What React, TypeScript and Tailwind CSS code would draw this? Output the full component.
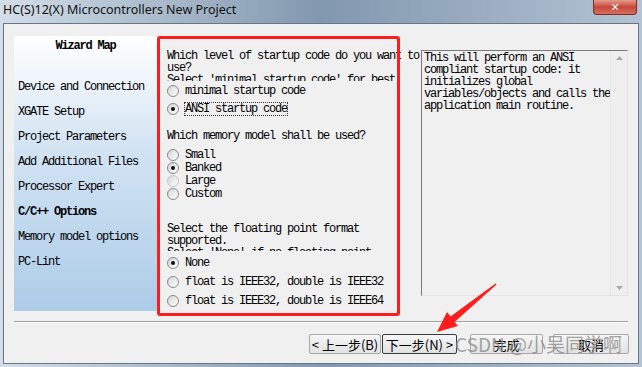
import React from 'react';

// --- shared text styles ---
const MONO = "font-['Liberation_Mono',monospace] text-[12px] leading-[12px] tracking-[-1.2px] text-black";

// --- Radio button (Win7 look) ---
const Radio: React.FC<{ checked?: boolean; disabled?: boolean }> = ({ checked, disabled }) => (
  <span
    className={`w-[12px] h-[12px] rounded-full border flex items-center justify-center shrink-0 bg-linear-to-br from-[#d6d6d6] to-white ${
      disabled ? 'border-[#c8c8c8]' : 'border-[#8a8a8a]'
    }`}
  >
    {checked && <span className="w-[4px] h-[4px] rounded-full bg-[#111]" />}
  </span>
);

const RadioRow: React.FC<{
  label: string;
  h: string;
  checked?: boolean;
  disabled?: boolean;
  focused?: boolean;
}> = ({ label, h, checked, disabled, focused }) => (
  <div className={`flex items-center gap-[6px] ${h}`}>
    <Radio checked={checked} disabled={disabled} />
    <span
      className={`${MONO} whitespace-pre ${disabled ? 'text-[#a0a0a0]' : ''} ${
        focused ? 'outline outline-1 outline-dotted outline-[#333] outline-offset-0' : ''
      }`}
    >
      {label}
    </span>
  </div>
);

const WIZARD_ITEMS = [
  { label: 'Device and Connection' },
  { label: 'XGATE Setup' },
  { label: 'Project Parameters' },
  { label: 'Add Additional Files' },
  { label: 'Processor Expert' },
  { label: 'C/C++ Options', bold: true },
  { label: 'Memory model options' },
  { label: 'PC-Lint' },
];

const WizardButton: React.FC<{ label: string; w: string; isDefault?: boolean }> = ({ label, w, isDefault }) => (
  <div
    className={`${w} h-[20px] flex items-center justify-center border rounded-[2px] bg-linear-to-b from-[#f6f6f6] to-[#e2e2e2] font-['Noto_Sans_CJK_SC',sans-serif] text-[13px] leading-none text-black whitespace-pre ${
      isDefault ? 'border-[#3c3c3c]' : 'border-[#a8a8a8]'
    }`}
  >
    {label}
  </div>
);

export default function App() {
  return (
    <div className="relative w-[642px] h-[367px] overflow-hidden flex flex-col bg-linear-to-r from-[#d3dee8] via-[#8298af] to-[#b3c3d3]">
      {/* title bar */}
      <div className="h-[23px] shrink-0 flex items-start">
        <span className="pl-[3px] pt-[2px] font-['Noto_Sans',sans-serif] text-[12.5px] leading-[16px] text-[#111]">
          HC(S)12(X) Microcontrollers New Project
        </span>
        <div className="ml-auto mr-[5px] w-[44px] h-[15px] rounded-b-[4px] border border-t-0 border-[#7a2e26] bg-linear-to-b from-[#e39a8c] via-[#c6463a] to-[#d7705f] flex items-center justify-center">
          <span className="text-white font-['DejaVu_Sans',sans-serif] font-bold text-[11px] leading-none">✕</span>
        </div>
      </div>

      {/* dialog body */}
      <div className="ml-[3px] mr-[3px] mb-[3px] flex-1 bg-[#f0f0f0] border border-[#66778a] pt-[12px] pl-[10px]">
        <div className="flex h-[275px]">
          {/* wizard map */}
          <div className="w-[143px] shrink-0 bg-linear-to-b from-white via-[#d3e4f3] via-40% to-[#adcce8]">
            <div className={`${MONO} font-bold h-[20px] flex items-center justify-center`}>Wizard Map</div>
            <div className="mt-[18px] pl-[4px]">
              {WIZARD_ITEMS.map(item => (
                <div key={item.label} className={`${MONO} h-[25px] flex items-center ${item.bold ? 'font-bold' : ''}`}>
                  {item.label}
                </div>
              ))}
            </div>
          </div>

          {/* options column */}
          <div className="w-[264px] shrink-0 pl-[10px] pt-[14px]">
            <div className="h-[31px] overflow-hidden">
              <div className={`${MONO} whitespace-pre`}>Which level of startup code do you want to</div>
              <div className={MONO}>use?</div>
              <div className={`${MONO} whitespace-pre`}>Select 'minimal startup code' for best</div>
            </div>
            <div className="mt-[1px]">
              <RadioRow label="minimal startup code" h="h-[18px]" />
              <RadioRow label="ANSI startup code" h="h-[18px]" checked focused />
            </div>

            <div className={`${MONO} mt-[12px] whitespace-pre`}>Which memory model shall be used?</div>
            <div className="mt-[6px]">
              <RadioRow label="Small" h="h-[13px]" />
              <RadioRow label="Banked" h="h-[13px]" checked />
              <RadioRow label="Large" h="h-[13px]" disabled />
              <RadioRow label="Custom" h="h-[13px]" />
            </div>

            <div className="mt-[23px] h-[28px] overflow-hidden">
              <div className={`${MONO} whitespace-pre`}>Select the floating point format</div>
              <div className={MONO}>supported.</div>
              <div className={`${MONO} whitespace-pre`}>Select 'None' if no floating point</div>
            </div>
            <div className="mt-[2px]">
              <RadioRow label="None" h="h-[19px]" checked />
              <RadioRow label="float is IEEE32, double is IEEE32" h="h-[19px]" />
              <RadioRow label="float is IEEE32, double is IEEE64" h="h-[19px]" />
            </div>
          </div>

          {/* description box */}
          <div className="mt-[14px] w-[207px] h-[246px] flex border border-t-[#7a7a7a] border-l-[#7a7a7a] border-r-[#e3e3e3] border-b-[#e3e3e3] bg-[#f0f0f0]">
            <div className={`${MONO} flex-1 pl-[2px] pt-[1px]`}>
              <div className="whitespace-pre">This will perform an ANSI</div>
              <div className="whitespace-pre">compliant startup code: it</div>
              <div className="whitespace-pre">initializes global</div>
              <div className="whitespace-pre">variables/objects and calls the</div>
              <div className="whitespace-pre">application main routine.</div>
            </div>
            <div className="w-[17px] border-l border-[#e6e6e6] bg-[#efefef] flex flex-col items-center justify-between py-[5px]">
              <svg width="7" height="4" viewBox="0 0 7 4">
                <path d="M0 4 L3.5 0 L7 4 Z" fill="#a8a8a8" />
              </svg>
              <svg width="7" height="4" viewBox="0 0 7 4">
                <path d="M0 0 L3.5 4 L7 0 Z" fill="#a8a8a8" />
              </svg>
            </div>
          </div>
        </div>

        {/* separator */}
        <div className="mt-[10px] w-[614px] h-[2px] border-t border-[#a0a0a0] border-b border-b-white" />

        {/* buttons */}
        <div className="mt-[11px] flex ml-[295px]">
          <WizardButton label="< 上一步(B)" w="w-[72px]" />
          <div className="w-[1px]" />
          <WizardButton label="下一步(N) >" w="w-[75px]" isDefault />
          <div className="w-[13px]" />
          <WizardButton label="完成" w="w-[73px]" />
          <div className="w-[10px]" />
          <WizardButton label="取消" w="w-[76px]" />
        </div>
      </div>

      {/* annotation: red frame */}
      <div className="absolute left-[157px] top-[36px] w-[243px] h-[280px] border-[3px] border-[#ff1c1c] rounded-[3px] pointer-events-none" />

      {/* annotation: red arrow */}
      <svg className="absolute inset-0 pointer-events-none" width="642" height="367" viewBox="0 0 642 367">
        <polygon
          points="437,332 458,326 454.5,322 496.5,284.5 495.5,283.5 450.5,316.5 447,312"
          fill="#ff1c1c"
        />
      </svg>

      {/* watermark */}
      <div className="absolute left-[455px] top-[332px] font-['Noto_Sans_CJK_SC',sans-serif] text-[19px] leading-[24px] text-[#8c8c8c]/80 whitespace-pre pointer-events-none">
        CSDN @小吴同学啊
      </div>
    </div>
  );
}
